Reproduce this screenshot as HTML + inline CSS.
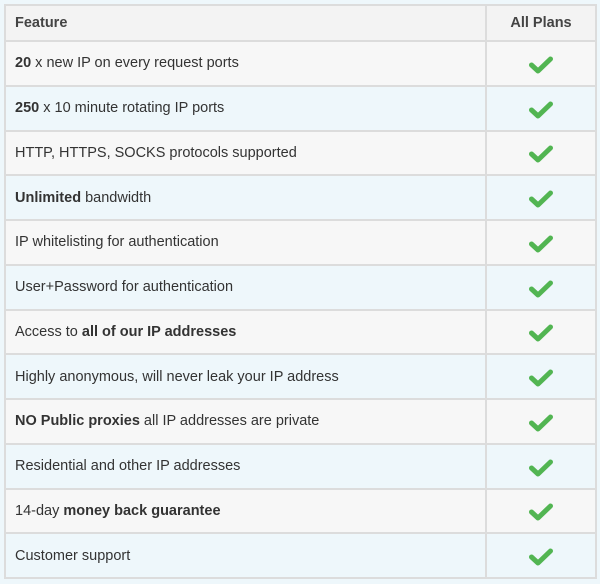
<!DOCTYPE html><html><head><style>
body{margin:0;background:#eef7fb;width:600px;height:584px;overflow:hidden;font-family:"Liberation Sans",sans-serif;}
table{position:absolute;left:4px;top:4px;width:593px;border-collapse:collapse;font-size:14.5px;color:#333;}
td,th{border:2px solid #dcdcdc;padding:0 0 0 9px;text-align:left;}
th{height:34px;background:#f3f3f3;font-weight:bold;color:#444;}
td{height:42.75px;}
tr:nth-child(odd) td{background:#eef7fb}
tr:nth-child(even) td{background:#f7f7f7}
td:last-child,th:last-child{width:108px;padding:0;text-align:center}
svg{display:block;margin:3px auto 0}
</style></head><body>
<table>
<tr><th>Feature</th><th>All Plans</th></tr>
<tr><td><b>20</b> x new IP on every request ports</td><td>C</td></tr>
<tr><td><b>250</b> x 10 minute rotating IP ports</td><td>C</td></tr>
<tr><td>HTTP, HTTPS, SOCKS protocols supported</td><td>C</td></tr>
<tr><td><b>Unlimited</b> bandwidth</td><td>C</td></tr>
<tr><td>IP whitelisting for authentication</td><td>C</td></tr>
<tr><td>User+Password for authentication</td><td>C</td></tr>
<tr><td>Access to <b>all of our IP addresses</b></td><td>C</td></tr>
<tr><td>Highly anonymous, will never leak your IP address</td><td>C</td></tr>
<tr><td><b>NO Public proxies</b> all IP addresses are private</td><td>C</td></tr>
<tr><td>Residential and other IP addresses</td><td>C</td></tr>
<tr><td>14-day <b>money back guarantee</b></td><td>C</td></tr>
<tr><td>Customer support</td><td>C</td></tr>
</table>
<script>
document.querySelectorAll('td:last-child').forEach(function(t){t.innerHTML='<svg width="26" height="20" viewBox="0 0 26 20"><path d="M3.5 10 L10 16 L22.5 4" fill="none" stroke="#52b552" stroke-width="5" stroke-linecap="round" stroke-linejoin="round"/></svg>';});
</script>
</body></html>
